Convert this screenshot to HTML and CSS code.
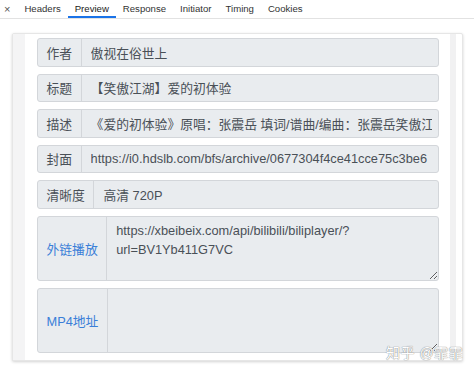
FILE: index.html
```html
<!DOCTYPE html>
<html lang="zh">
<head>
<meta charset="utf-8">
<link rel="stylesheet" href="styles.css">
</head>
<body>
<div class="tabs">
  <span class="tab close">×</span>
  <span class="tab">Headers</span>
  <span class="tab active">Preview</span>
  <span class="tab">Response</span>
  <span class="tab">Initiator</span>
  <span class="tab">Timing</span>
  <span class="tab">Cookies</span>
</div>
<div class="card">
  <div class="band band-left"></div>
  <div class="main">
    <div class="group"><span class="label">作者</span><input class="value" readonly value="傲视在俗世上"></div>
    <div class="group"><span class="label">标题</span><input class="value" readonly value="【笑傲江湖】爱的初体验"></div>
    <div class="group"><span class="label">描述</span><input class="value" readonly value="《爱的初体验》原唱：张震岳 填词/谱曲/编曲：张震岳笑傲江湖"></div>
    <div class="group"><span class="label">封面</span><input class="value" readonly value="https://i0.hdslb.com/bfs/archive/0677304f4ce41cce75c3be6"></div>
    <div class="group"><span class="label">清晰度</span><input class="value" readonly value="高清 720P"></div>
    <div class="group tall"><span class="label link">外链播放</span><textarea class="value area" readonly>https://xbeibeix.com/api/bilibili/biliplayer/?url=BV1Yb411G7VC</textarea></div>
    <div class="group tall"><span class="label link">MP4地址</span><textarea class="value area" readonly></textarea></div>
  </div>
  <div class="band band-right"></div>
</div>
<div class="watermark">知乎 @霏霏</div>
</body>
</html>
```
FILE: styles.css
```css
* { box-sizing: border-box; }
html, body { margin: 0; padding: 0; background: #fff; }
body {
  width: 474px;
  height: 370px;
  overflow: hidden;
  position: relative;
  font-family: "Liberation Sans", "Noto Sans CJK SC", sans-serif;
}
.tabs {
  display: flex;
  height: 19px;
  border-bottom: 1px solid #e2e2e2;
  padding-left: 0;
  font-size: 9.6px;
  color: #333;
}
.tab {
  padding: 0 7px;
  line-height: 18px;
  white-space: nowrap;
}
.tab.close {
  padding: 0 7px 0 4px;
  font-size: 11px;
  color: #555;
}
.tab.active {
  border-bottom: 2px solid #1a73e8;
  color: #222;
}
.card {
  display: flex;
  margin: 14px 0 0 12px;
  width: 451px;
  height: 328px;
  background: #fff;
  border: 1px solid #e6e6e6;
  border-radius: 2px;
  box-shadow: 0 1px 3px rgba(0,0,0,0.18);
}
.band-left {
  width: 12px;
  background: #f4f4f5;
}
.band-right {
  width: 6px;
  margin: 0 6px 0 11px;
  background: #f1f1f2;
}
.main {
  flex: 1;
  padding: 4px 0 0 12px;
  display: flex;
  flex-direction: column;
  gap: 7px;
}
.group {
  display: flex;
  height: 28.5px;
  border: 1px solid #d3d6da;
  border-radius: 3px;
  background: #e9ecef;
  font-size: 12.8px;
  color: #495057;
}
.group.tall { height: 65px; }
.label {
  display: flex;
  align-items: center;
  padding: 0 8.5px;
  border-right: 1px solid #d3d6da;
  white-space: nowrap;
}
.label.link { color: #3a7fd8; }
.value {
  flex: 1;
  min-width: 0;
  border: none;
  background: transparent;
  font: inherit;
  color: inherit;
  padding: 0 6px 0 9px;
  outline: none;
}
.area {
  resize: vertical;
  padding: 4px 6px 0 9px;
  line-height: 19px;
  overflow: hidden;
}
.watermark {
  position: absolute;
  left: 386px;
  top: 342px;
  font-size: 14px;
  color: #fff;
  letter-spacing: 0.5px;
  text-shadow: 0 0 1px #8a8a8a, 0 0 1px #8a8a8a;
}
```
